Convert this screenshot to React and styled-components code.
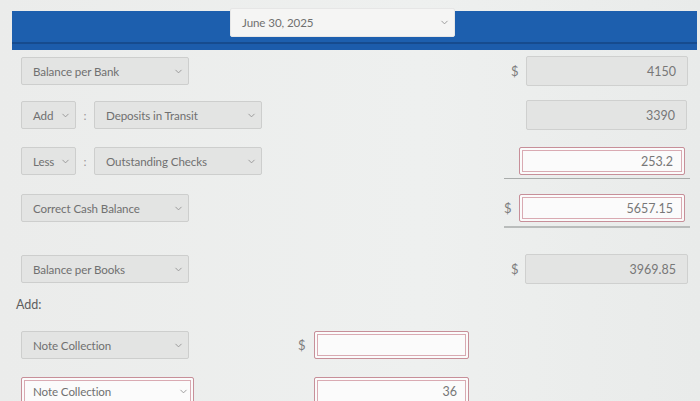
import React from "react";
import styled, { createGlobalStyle, css } from "styled-components";
import { ChevronDown } from "lucide-react";

const Global = createGlobalStyle`
  html, body {
    margin: 0;
    padding: 0;
  }
  body {
    width: 700px;
    height: 401px;
    overflow: hidden;
    background: linear-gradient(90deg, #ebeceb 0%, #eef0ef 60%, #e9ebea 100%);
    font-family: Lato, "Open Sans", sans-serif;
    color: #666;
  }
`;

const Page = styled.div`
  padding-top: 11px;
`;

const Header = styled.div`
  margin: 0 3px 0 12px;
  height: 39px;
  display: flex;
  align-items: flex-start;
  padding-left: 218px;
  background: linear-gradient(
    180deg,
    #1d5fae 0,
    #1d5fae 31px,
    #164b8e 31px,
    #164b8e 33px,
    #1c5cab 33px
  );
`;

const redBox = css`
  background: #fbfbfb;
  border: 1px solid #c78f99;
  box-shadow: inset 0 0 0 2px #fbfbfb, inset 0 0 0 3px #d9aab2;
`;

const Select = styled.div`
  box-sizing: border-box;
  width: ${({ $w }) => $w}px;
  height: ${({ $h }) => $h || 28}px;
  margin-top: ${({ $mt }) => $mt || 0}px;
  display: flex;
  align-items: center;
  justify-content: space-between;
  padding: 0 4px 0 11px;
  font-size: 11.6px;
  color: #707070;
  letter-spacing: -0.1px;
  border-radius: 2px;
  background: ${({ $light }) => ($light ? "#f5f5f4" : "#e3e4e3")};
  border: 1px solid ${({ $light }) => ($light ? "#e6e6e6" : "#cdcecd")};
  ${({ $red }) => $red && redBox}
  svg {
    flex: none;
    color: #959595;
  }
`;

const Content = styled.div`
  display: flex;
  flex-direction: column;
  padding-left: 21px;
`;

const Row = styled.div`
  display: grid;
  grid-template-columns: 276px 180px 1fr;
  align-items: center;
  height: 30px;
  margin-top: ${({ $gap }) => $gap}px;
`;

const Left = styled.div`
  display: flex;
  align-items: center;
`;

const Colon = styled.span`
  width: 18px;
  text-align: center;
  font-size: 12px;
  color: #9a9a9a;
`;

const Label = styled.span`
  margin-left: -5px;
  font-size: 12.5px;
  color: #5e5e5e;
`;

const Amount = styled.div`
  display: flex;
  align-items: center;
  justify-self: start;
  margin-left: ${({ $ml }) => $ml || 0}px;
  position: relative;
  ${({ $rule }) =>
    $rule &&
    css`
      &::after {
        content: "";
        position: absolute;
        left: 0;
        right: -5px;
        bottom: ${$rule === 2 ? -6 : -4}px;
        height: ${$rule === 2 ? 2 : 1}px;
        background: ${$rule === 2 ? "#b9bcbb" : "#a9acab"};
      }
    `}
`;

const Dollar = styled.span`
  width: ${({ $w }) => $w || 15}px;
  font-size: 13px;
  color: #7d7d7d;
`;

const Input = styled.div`
  box-sizing: border-box;
  width: ${({ $w }) => $w}px;
  height: ${({ $h }) => $h || 30}px;
  display: flex;
  align-items: center;
  justify-content: flex-end;
  padding-right: 11px;
  font-size: 12.5px;
  color: #777;
  border-radius: 2px;
  background: #e3e4e3;
  border: 1px solid #cfd0cf;
  ${({ $red }) => $red && redBox}
`;

const Chev = () => <ChevronDown size={11} strokeWidth={2} />;

export default function App() {
  return (
    <>
      <Global />
      <Page>
        <Header>
          <Select $w={225} $h={29} $mt={-3} $light>
            <span>June 30, 2025</span>
            <Chev />
          </Select>
        </Header>
        <Content>
          <Row $gap={6}>
            <Left>
              <Select $w={168}>
                <span>Balance per Bank</span>
                <Chev />
              </Select>
            </Left>
            <div />
            <Amount $ml={34}>
              <Dollar>$</Dollar>
              <Input $w={162}>4150</Input>
            </Amount>
          </Row>
          <Row $gap={14}>
            <Left>
              <Select $w={55}>
                <span>Add</span>
                <Chev />
              </Select>
              <Colon>:</Colon>
              <Select $w={168}>
                <span>Deposits in Transit</span>
                <Chev />
              </Select>
            </Left>
            <div />
            <Amount $ml={49}>
              <Input $w={161}>3390</Input>
            </Amount>
          </Row>
          <Row $gap={16}>
            <Left>
              <Select $w={55}>
                <span>Less</span>
                <Chev />
              </Select>
              <Colon>:</Colon>
              <Select $w={168}>
                <span>Outstanding Checks</span>
                <Chev />
              </Select>
            </Left>
            <div />
            <Amount $ml={27} $rule={1}>
              <Dollar />
              <Input $w={166} $h={28} $red>
                253.2
              </Input>
            </Amount>
          </Row>
          <Row $gap={17}>
            <Left>
              <Select $w={168}>
                <span>Correct Cash Balance</span>
                <Chev />
              </Select>
            </Left>
            <div />
            <Amount $ml={27} $rule={2}>
              <Dollar>$</Dollar>
              <Input $w={166} $h={28} $red>
                5657.15
              </Input>
            </Amount>
          </Row>
          <Row $gap={31}>
            <Left>
              <Select $w={168}>
                <span>Balance per Books</span>
                <Chev />
              </Select>
            </Left>
            <div />
            <Amount $ml={34}>
              <Dollar $w={14}>$</Dollar>
              <Input $w={163}>3969.85</Input>
            </Amount>
          </Row>
          <Row $gap={5}>
            <Left>
              <Label>Add:</Label>
            </Left>
          </Row>
          <Row $gap={11}>
            <Left>
              <Select $w={168}>
                <span>Note Collection</span>
                <Chev />
              </Select>
            </Left>
            <Amount $ml={1}>
              <Dollar $w={16}>$</Dollar>
              <Input $w={155} $h={28} $red />
            </Amount>
            <div />
          </Row>
          <Row $gap={16}>
            <Left>
              <Select $w={173} $red>
                <span>Note Collection</span>
                <Chev />
              </Select>
            </Left>
            <Amount $ml={17}>
              <Input $w={155} $h={28} $red>
                36
              </Input>
            </Amount>
            <div />
          </Row>
        </Content>
      </Page>
    </>
  );
}
